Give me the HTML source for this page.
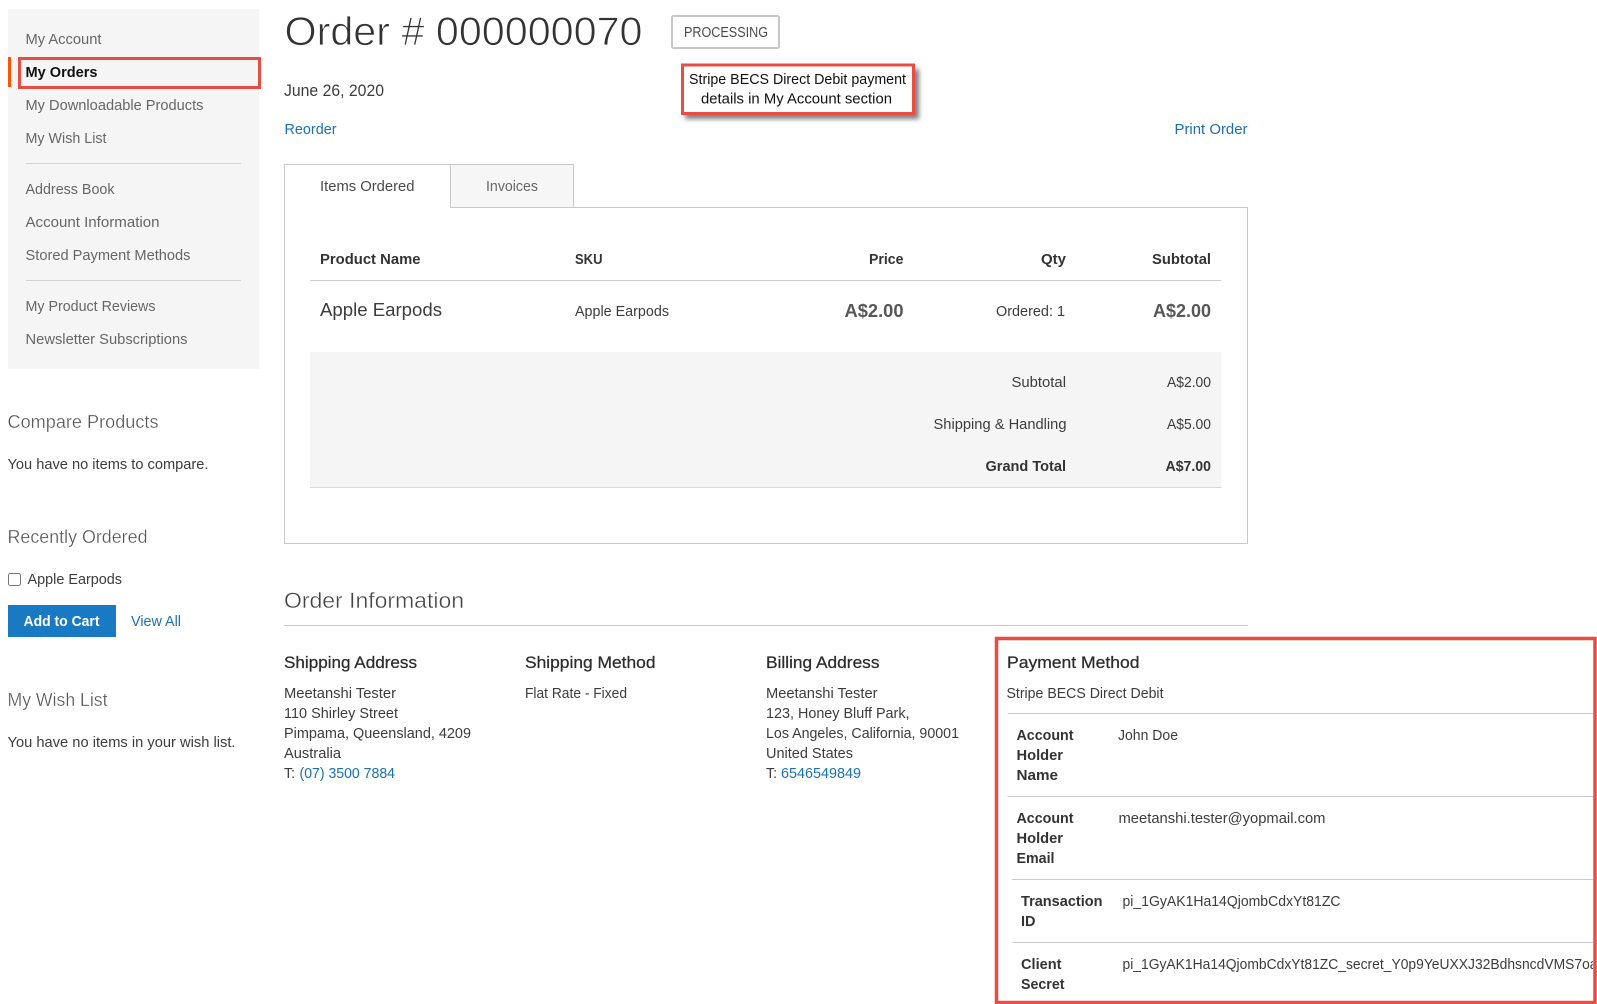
<!DOCTYPE html>
<html lang="en"><head><meta charset="utf-8"><title>Order # 000000070</title>
<style>
html,body{margin:0;padding:0;background:#fff;width:1597px;height:1004px;overflow:hidden}
svg{display:block;position:absolute;left:0;top:0}
text{font-family:"Liberation Sans",sans-serif;font-size:14.5px;fill:#3c3c3c}
.n{fill:#666}
.b{font-weight:bold;fill:#333}
.s{fill:#2c2c2c;stroke:#2c2c2c;stroke-width:.25px;font-size:16.5px}
.l{fill:#1a6fb5}
.h{fill:#555;stroke:#fff;stroke-width:.3px;font-size:18.5px}
.k{fill:#111}
</style></head><body>
<svg width="1597" height="1004" viewBox="0 0 1597 1004" xmlns="http://www.w3.org/2000/svg">
<defs>
<filter id="sh" x="-10%" y="-20%" width="125%" height="150%"><feGaussianBlur stdDeviation="2.5"/></filter>
<clipPath id="cp"><rect x="1000" y="930" width="593" height="70"/></clipPath>
</defs>

<!-- sidebar -->
<rect x="8" y="9" width="251" height="360" fill="#f5f5f5"/>
<rect x="8" y="57" width="3" height="30" fill="#ff5501"/>
<rect x="19.5" y="58.5" width="240" height="29" fill="none" stroke="#e84c44" stroke-width="3"/>
<text class="n" x="25.5" y="44" textLength="76" lengthAdjust="spacingAndGlyphs">My Account</text>
<text class="k" x="25.5" y="77" textLength="72" lengthAdjust="spacingAndGlyphs" font-weight="bold">My Orders</text>
<text class="n" x="25.5" y="110" textLength="178" lengthAdjust="spacingAndGlyphs">My Downloadable Products</text>
<text class="n" x="25.5" y="143" textLength="81" lengthAdjust="spacingAndGlyphs">My Wish List</text>
<text class="n" x="25.5" y="194" textLength="89" lengthAdjust="spacingAndGlyphs">Address Book</text>
<text class="n" x="25.5" y="227" textLength="134" lengthAdjust="spacingAndGlyphs">Account Information</text>
<text class="n" x="25.5" y="260" textLength="165" lengthAdjust="spacingAndGlyphs">Stored Payment Methods</text>
<text class="n" x="25.5" y="311" textLength="130" lengthAdjust="spacingAndGlyphs">My Product Reviews</text>
<text class="n" x="25.5" y="344" textLength="162" lengthAdjust="spacingAndGlyphs">Newsletter Subscriptions</text>
<rect x="26" y="163" width="215" height="1" fill="#d1d1d1"/>
<rect x="26" y="280" width="215" height="1" fill="#d1d1d1"/>

<text class="h" x="7.5" y="428" textLength="151" lengthAdjust="spacingAndGlyphs">Compare Products</text>
<text x="7.5" y="469" textLength="201" lengthAdjust="spacingAndGlyphs">You have no items to compare.</text>
<text class="h" x="7.5" y="543" textLength="140" lengthAdjust="spacingAndGlyphs">Recently Ordered</text>
<rect x="8.5" y="573.5" width="12" height="12" rx="2" fill="#fff" stroke="#767676"/>
<text x="27.5" y="584" textLength="94.5" lengthAdjust="spacingAndGlyphs">Apple Earpods</text>
<rect x="8" y="605" width="108" height="32" fill="#1979c3"/>
<text x="23.5" y="626" textLength="76" lengthAdjust="spacingAndGlyphs" font-weight="bold" style="fill:#fff">Add to Cart</text>
<text class="l" x="131" y="626" textLength="50" lengthAdjust="spacingAndGlyphs">View All</text>
<text class="h" x="7.5" y="706" textLength="100" lengthAdjust="spacingAndGlyphs">My Wish List</text>
<text x="7.5" y="747" textLength="228" lengthAdjust="spacingAndGlyphs">You have no items in your wish list.</text>

<!-- header -->
<text x="284.5" y="45" textLength="358" lengthAdjust="spacingAndGlyphs" style="font-size:40px;fill:#333;stroke:#fff;stroke-width:.8px">Order # 000000070</text>
<rect x="672" y="16" width="107" height="32" rx="1.5" fill="#fff" stroke="#c6c6c6" stroke-width="2"/>
<text x="684" y="37" textLength="84" lengthAdjust="spacingAndGlyphs" style="fill:#4a4a4a">PROCESSING</text>

<rect x="685" y="69" width="234" height="50" fill="#555" opacity=".75" filter="url(#sh)"/>
<rect x="682.5" y="65" width="231" height="48.5" fill="#fff" stroke="#e84c44" stroke-width="3"/>
<text class="k" x="689" y="84" textLength="217" lengthAdjust="spacingAndGlyphs">Stripe BECS Direct Debit payment</text>
<text class="k" x="701" y="103.5" textLength="191" lengthAdjust="spacingAndGlyphs">details in My Account section</text>

<text x="284" y="96" textLength="100" lengthAdjust="spacingAndGlyphs" style="font-size:16.5px">June 26, 2020</text>
<text class="l" x="284.5" y="134" textLength="52" lengthAdjust="spacingAndGlyphs">Reorder</text>
<text class="l" x="1174.5" y="134" textLength="73" lengthAdjust="spacingAndGlyphs">Print Order</text>

<!-- tabs + box -->
<rect x="284.5" y="207.5" width="963" height="336" fill="#fff" stroke="#c9c9c9"/>
<rect x="450.5" y="164.5" width="123" height="43" fill="#f6f6f6" stroke="#c9c9c9"/>
<path d="M284.5 208V164.5H450.5V207" fill="#fff" stroke="#c9c9c9"/>
<rect x="285" y="205" width="165" height="4" fill="#fff"/>
<text x="320" y="191" textLength="94.5" lengthAdjust="spacingAndGlyphs" style="fill:#4a4a4a">Items Ordered</text>
<text x="486" y="191" textLength="52" lengthAdjust="spacingAndGlyphs" style="fill:#666">Invoices</text>

<!-- table -->
<text class="b" x="320" y="264" textLength="100.5" lengthAdjust="spacingAndGlyphs">Product Name</text>
<text class="b" x="575" y="264" textLength="27.5" lengthAdjust="spacingAndGlyphs">SKU</text>
<text class="b" x="869" y="264" textLength="34.5" lengthAdjust="spacingAndGlyphs">Price</text>
<text class="b" x="1041" y="264" textLength="25" lengthAdjust="spacingAndGlyphs">Qty</text>
<text class="b" x="1152" y="264" textLength="59" lengthAdjust="spacingAndGlyphs">Subtotal</text>
<rect x="310" y="280" width="911.5" height="1" fill="#ccc"/>

<text x="320" y="316" textLength="122" lengthAdjust="spacingAndGlyphs" style="font-size:18.5px">Apple Earpods</text>
<text x="575" y="316" textLength="94" lengthAdjust="spacingAndGlyphs">Apple Earpods</text>
<text x="844.5" y="317" textLength="59" lengthAdjust="spacingAndGlyphs" font-weight="bold" style="font-size:18.5px;fill:#575757">A$2.00</text>
<text x="996" y="316" textLength="69" lengthAdjust="spacingAndGlyphs">Ordered: 1</text>
<text x="1153" y="317" textLength="58" lengthAdjust="spacingAndGlyphs" font-weight="bold" style="font-size:18.5px;fill:#575757">A$2.00</text>

<rect x="310" y="352" width="911.5" height="135" fill="#f5f5f5"/>
<rect x="310" y="487" width="911.5" height="1" fill="#d9d9d9"/>
<text x="1011.5" y="387" textLength="54.5" lengthAdjust="spacingAndGlyphs">Subtotal</text>
<text x="1167" y="387" textLength="44" lengthAdjust="spacingAndGlyphs">A$2.00</text>
<text x="933.5" y="429" textLength="133" lengthAdjust="spacingAndGlyphs">Shipping &amp; Handling</text>
<text x="1167" y="429" textLength="44" lengthAdjust="spacingAndGlyphs">A$5.00</text>
<text class="b" x="985.5" y="471" textLength="80.5" lengthAdjust="spacingAndGlyphs">Grand Total</text>
<text class="b" x="1165.5" y="471" textLength="45.5" lengthAdjust="spacingAndGlyphs">A$7.00</text>

<!-- order info -->
<text x="284" y="608" textLength="180" lengthAdjust="spacingAndGlyphs" style="font-size:22.5px;fill:#444;stroke:#fff;stroke-width:.4px">Order Information</text>
<rect x="284" y="625" width="964" height="1" fill="#c9c9c9"/>

<text class="s" x="284" y="668" textLength="133" lengthAdjust="spacingAndGlyphs">Shipping Address</text>
<text x="284" y="698" textLength="112" lengthAdjust="spacingAndGlyphs">Meetanshi Tester</text>
<text x="284" y="718" textLength="114" lengthAdjust="spacingAndGlyphs">110 Shirley Street</text>
<text x="284" y="738" textLength="187" lengthAdjust="spacingAndGlyphs">Pimpama, Queensland, 4209</text>
<text x="284" y="758" textLength="57" lengthAdjust="spacingAndGlyphs">Australia</text>
<text x="284" y="778" textLength="11" lengthAdjust="spacingAndGlyphs">T:</text>
<text class="l" x="299.5" y="778" textLength="95.5" lengthAdjust="spacingAndGlyphs">(07) 3500 7884</text>

<text class="s" x="525" y="668" textLength="130.5" lengthAdjust="spacingAndGlyphs">Shipping Method</text>
<text x="525" y="698" textLength="102" lengthAdjust="spacingAndGlyphs">Flat Rate - Fixed</text>

<text class="s" x="766" y="668" textLength="113.5" lengthAdjust="spacingAndGlyphs">Billing Address</text>
<text x="766" y="698" textLength="111.5" lengthAdjust="spacingAndGlyphs">Meetanshi Tester</text>
<text x="766" y="718" textLength="143.5" lengthAdjust="spacingAndGlyphs">123, Honey Bluff Park,</text>
<text x="766" y="738" textLength="193" lengthAdjust="spacingAndGlyphs">Los Angeles, California, 90001</text>
<text x="766" y="758" textLength="87" lengthAdjust="spacingAndGlyphs">United States</text>
<text x="766" y="778" textLength="11" lengthAdjust="spacingAndGlyphs">T:</text>
<text class="l" x="781" y="778" textLength="80" lengthAdjust="spacingAndGlyphs">6546549849</text>

<!-- payment -->
<rect x="1007.5" y="713" width="586" height="1" fill="#ccc"/>
<rect x="1007.5" y="796" width="586" height="1" fill="#ccc"/>
<rect x="1012" y="879" width="581" height="1" fill="#ccc"/>
<rect x="1012" y="942" width="581" height="1" fill="#ccc"/>

<text class="s" x="1007" y="668" textLength="132.5" lengthAdjust="spacingAndGlyphs">Payment Method</text>
<text x="1006.5" y="698" textLength="157" lengthAdjust="spacingAndGlyphs">Stripe BECS Direct Debit</text>

<text class="b" x="1016.5" y="740" textLength="57" lengthAdjust="spacingAndGlyphs">Account</text>
<text class="b" x="1016.5" y="760" textLength="46.5" lengthAdjust="spacingAndGlyphs">Holder</text>
<text class="b" x="1016.5" y="780" textLength="41.5" lengthAdjust="spacingAndGlyphs">Name</text>
<text x="1118" y="740" textLength="60" lengthAdjust="spacingAndGlyphs">John Doe</text>

<text class="b" x="1016.5" y="823" textLength="57" lengthAdjust="spacingAndGlyphs">Account</text>
<text class="b" x="1016.5" y="843" textLength="46.5" lengthAdjust="spacingAndGlyphs">Holder</text>
<text class="b" x="1016.5" y="863" textLength="38" lengthAdjust="spacingAndGlyphs">Email</text>
<text x="1118.5" y="823" textLength="207" lengthAdjust="spacingAndGlyphs">meetanshi.tester@yopmail.com</text>

<text class="b" x="1021" y="906" textLength="81.5" lengthAdjust="spacingAndGlyphs">Transaction</text>
<text class="b" x="1021" y="926" textLength="14.5" lengthAdjust="spacingAndGlyphs">ID</text>
<text x="1122.5" y="906" textLength="218" lengthAdjust="spacingAndGlyphs">pi_1GyAK1Ha14QjombCdxYt81ZC</text>

<text class="b" x="1021" y="969" textLength="40.5" lengthAdjust="spacingAndGlyphs">Client</text>
<text class="b" x="1021" y="989" textLength="43.5" lengthAdjust="spacingAndGlyphs">Secret</text>
<g clip-path="url(#cp)"><text x="1122.5" y="969" textLength="475" lengthAdjust="spacingAndGlyphs">pi_1GyAK1Ha14QjombCdxYt81ZC_secret_Y0p9YeUXXJ32BdhsncdVMS7oa</text></g>

<rect x="996.5" y="638.5" width="598.5" height="364" fill="none" stroke="#e84c44" stroke-width="3.5"/>
</svg>
</body></html>
